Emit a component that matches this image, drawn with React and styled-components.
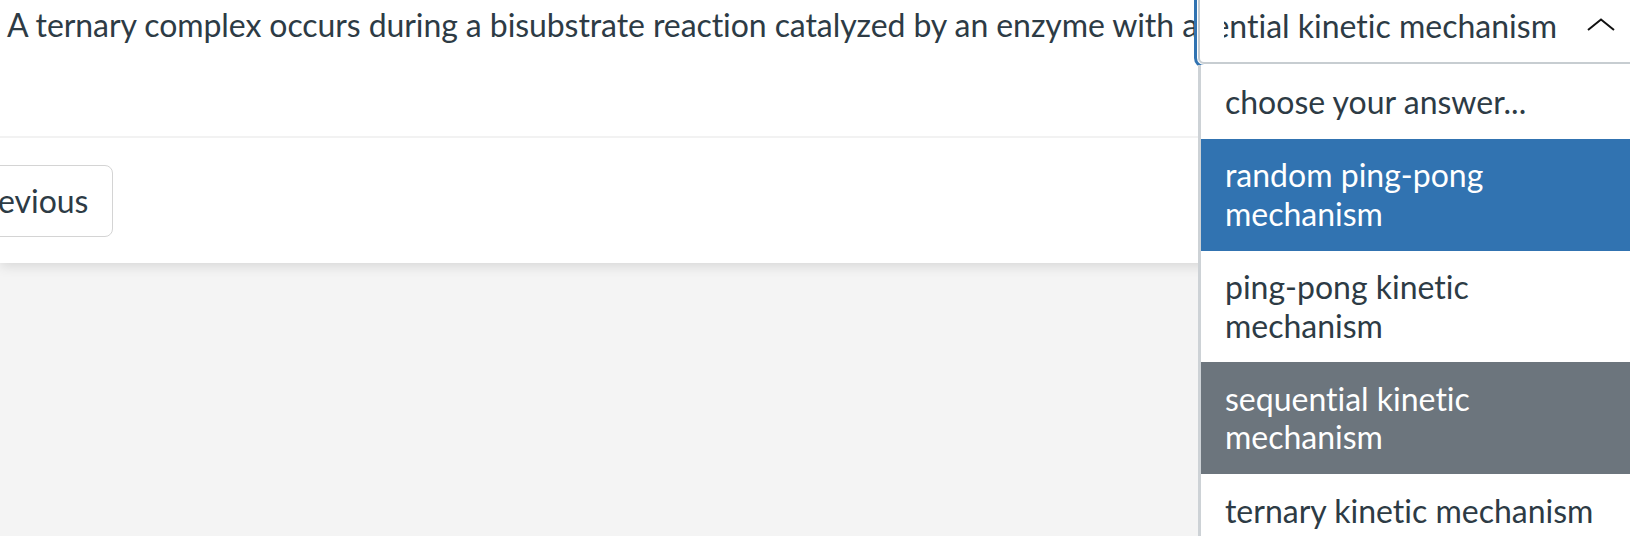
import styled, { createGlobalStyle } from 'styled-components'

const OPTIONS = [
  { id: 'none', label: 'choose your answer...' },
  { id: 'random', label: 'random ping-pong mechanism', tone: 'active' },
  { id: 'pingpong', label: 'ping-pong kinetic mechanism' },
  { id: 'sequential', label: 'sequential kinetic mechanism', tone: 'selected' },
  { id: 'ternary', label: 'ternary kinetic mechanism' },
]

const GlobalStyle = createGlobalStyle`
  body {
    margin: 0;
    background: #f4f4f4;
    font-family: Lato, 'Liberation Sans', sans-serif;
    font-variant-ligatures: none;
    color: #2d3b45;
  }
`

const Page = styled.div`
  height: 536px;
  overflow: hidden;
  background: #f4f4f4;
`

const Card = styled.div`
  background: #fff;
  box-shadow: 0 3px 12px rgba(0, 0, 0, 0.12);
`

const QuestionRow = styled.div`
  display: flex;
  align-items: flex-start;
  height: 136px;
  padding-left: 7px;
  border-bottom: 2px solid #f2f2f2;
  white-space: nowrap;
`

const Prompt = styled.span`
  flex: none;
  font-size: 32px;
  line-height: 38.4px;
  letter-spacing: -0.08px;
  margin-top: 6px;
`

const SelectWrap = styled.div`
  position: relative;
  flex: none;
  margin-left: 0;
  margin-top: -12px;
  z-index: 2;
`

const SelectBox = styled.div`
  display: flex;
  align-items: center;
  width: 480px;
  box-sizing: border-box;
  padding: 17px 0 17px 24px;
  border: 2px solid #c7cdd1;
  border-radius: 6px;
  background: #fff;
  box-shadow: 0 0 0 1px #fff, 0 0 0 4px #3173b1;
`

const SelectValue = styled.div`
  display: flex;
  justify-content: flex-end;
  width: 333px;
  overflow: hidden;
  font-size: 32px;
  line-height: 38.4px;
`

const Chevron = styled.svg`
  width: 28px;
  height: 13px;
  margin-left: 30px;
  margin-top: -4px;
  flex: none;
`

const OptionList = styled.ul`
  position: absolute;
  top: calc(100% + 1px);
  left: 0;
  width: 480px;
  margin: 0;
  padding: 0;
  list-style: none;
  background: #fff;
  border-left: 3px solid #cdd2d6;
  box-sizing: border-box;
`

const toneColors = {
  active: '#3173b1',
  selected: '#6c757d',
}

const Option = styled.li`
  padding: 17.5px 70px 17.5px 24px;
  font-size: 32px;
  line-height: 38.4px;
  white-space: normal;
  background: ${(p) => toneColors[p.$tone] || '#fff'};
  color: ${(p) => (p.$tone ? '#fff' : '#2d3b45')};
`

const FooterRow = styled.div`
  height: 125px;
  padding-top: 27px;
  box-sizing: border-box;
`

const GhostButton = styled.button`
  margin-left: -57px;
  padding: 16px 24px;
  font-family: inherit;
  font-size: 32px;
  line-height: 38.4px;
  font-variant-ligatures: none;
  color: #2d3b45;
  background: #fff;
  border: 1px solid #d4d4d4;
  border-radius: 8px;
  cursor: pointer;
`

const App = () => {
  return (
    <Page>
      <GlobalStyle />
      <Card>
        <QuestionRow>
          <Prompt>A ternary complex occurs during a bisubstrate reaction catalyzed by an enzyme with a</Prompt>
          <SelectWrap>
            <SelectBox>
              <SelectValue>
                <span>sequential kinetic mechanism</span>
              </SelectValue>
              <Chevron viewBox="0 0 28 13">
                <polyline points="1,12 14,1.5 27,12" fill="none" stroke="#111" strokeWidth="2" />
              </Chevron>
            </SelectBox>
            <OptionList>
              {OPTIONS.map((opt) => (
                <Option key={opt.id} $tone={opt.tone}>
                  {opt.label}
                </Option>
              ))}
            </OptionList>
          </SelectWrap>
        </QuestionRow>
        <FooterRow>
          <GhostButton>Previous</GhostButton>
        </FooterRow>
      </Card>
    </Page>
  )
}

export default App
